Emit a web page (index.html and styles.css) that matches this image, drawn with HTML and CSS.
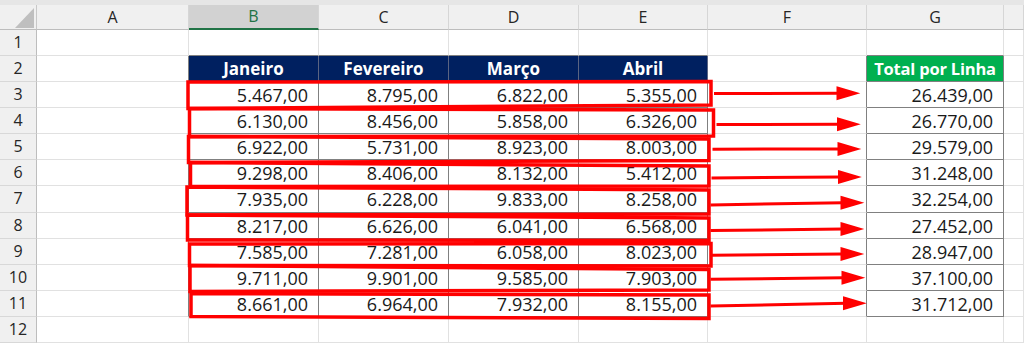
FILE: index.html
```html
<!DOCTYPE html>
<html lang="pt">
<head>
<meta charset="utf-8">
<title>Planilha</title>
<link rel="stylesheet" href="styles.css">
</head>
<body>
<div class="sheet">
  <div class="strip"></div>
  <div class="grid">
    <div class="corner"><svg width="37" height="25" viewBox="0 0 37 25"><polygon points="15,23 34,23 34,3" fill="#bfbfbf"/></svg></div>
    <div class="ch">A</div>
    <div class="ch sel">B</div>
    <div class="ch">C</div>
    <div class="ch">D</div>
    <div class="ch">E</div>
    <div class="ch">F</div>
    <div class="ch">G</div>
    <div class="ch"></div>

    <div class="rh">1</div>
    <div class="c"></div>
    <div class="c top"></div><div class="c top"></div><div class="c top"></div><div class="c top"></div>
    <div class="c"></div>
    <div class="c top"></div>
    <div class="c"></div>

    <div class="rh">2</div>
    <div class="c edge"></div>
    <div class="c hd">Janeiro</div>
    <div class="c hd">Fevereiro</div>
    <div class="c hd">Março</div>
    <div class="c hd">Abril</div>
    <div class="c edge"></div>
    <div class="c tot">Total por Linha</div>
    <div class="c"></div>

    <div class="rh">3</div><div class="c edge"></div>
    <div class="c num">5.467,00</div><div class="c num">8.795,00</div><div class="c num">6.822,00</div><div class="c num">5.355,00</div>
    <div class="c edge"></div><div class="c num">26.439,00</div><div class="c"></div>

    <div class="rh">4</div><div class="c edge"></div>
    <div class="c num">6.130,00</div><div class="c num">8.456,00</div><div class="c num">5.858,00</div><div class="c num">6.326,00</div>
    <div class="c edge"></div><div class="c num">26.770,00</div><div class="c"></div>

    <div class="rh">5</div><div class="c edge"></div>
    <div class="c num">6.922,00</div><div class="c num">5.731,00</div><div class="c num">8.923,00</div><div class="c num">8.003,00</div>
    <div class="c edge"></div><div class="c num">29.579,00</div><div class="c"></div>

    <div class="rh">6</div><div class="c edge"></div>
    <div class="c num">9.298,00</div><div class="c num">8.406,00</div><div class="c num">8.132,00</div><div class="c num">5.412,00</div>
    <div class="c edge"></div><div class="c num">31.248,00</div><div class="c"></div>

    <div class="rh">7</div><div class="c edge"></div>
    <div class="c num">7.935,00</div><div class="c num">6.228,00</div><div class="c num">9.833,00</div><div class="c num">8.258,00</div>
    <div class="c edge"></div><div class="c num">32.254,00</div><div class="c"></div>

    <div class="rh">8</div><div class="c edge"></div>
    <div class="c num">8.217,00</div><div class="c num">6.626,00</div><div class="c num">6.041,00</div><div class="c num">6.568,00</div>
    <div class="c edge"></div><div class="c num">27.452,00</div><div class="c"></div>

    <div class="rh">9</div><div class="c edge"></div>
    <div class="c num">7.585,00</div><div class="c num">7.281,00</div><div class="c num">6.058,00</div><div class="c num">8.023,00</div>
    <div class="c edge"></div><div class="c num">28.947,00</div><div class="c"></div>

    <div class="rh">10</div><div class="c edge"></div>
    <div class="c num">9.711,00</div><div class="c num">9.901,00</div><div class="c num">9.585,00</div><div class="c num">7.903,00</div>
    <div class="c edge"></div><div class="c num">37.100,00</div><div class="c"></div>

    <div class="rh">11</div><div class="c edge"></div>
    <div class="c num">8.661,00</div><div class="c num">6.964,00</div><div class="c num">7.932,00</div><div class="c num">8.155,00</div>
    <div class="c edge"></div><div class="c num">31.712,00</div><div class="c"></div>

    <div class="rh">12</div>
    <div class="c"></div><div class="c"></div><div class="c"></div><div class="c"></div><div class="c"></div><div class="c"></div><div class="c"></div><div class="c"></div>
  </div>

  <svg class="marks" width="1024" height="343" viewBox="0 0 1024 343">
    <g fill="none" stroke="#ff0000" stroke-width="3.5" stroke-linejoin="miter">
      <polygon points="188,82 711,81.5 711,105 188,108.5"/>
      <polygon points="189.5,108.5 713.5,110 713.5,136 189.5,136.5"/>
      <polygon points="188.5,136.5 709,139 709,160.5 188.5,162.5"/>
      <polygon points="190.5,162.5 709,166 709,186 190.5,186.5"/>
      <polygon points="187,187 709,190 709,214 187,215"/>
      <polygon points="187.5,215 709,218 709,240.5 187.5,240"/>
      <polygon points="189.5,244 711,243.5 711,266 189.5,265.5"/>
      <polygon points="190,265.5 709,269.5 709,290 190,291.5"/>
      <polygon points="191,293.5 709,295 709,318.5 191,316.5"/>
    </g>
    <g stroke="#ff0000" stroke-width="3" fill="#ff0000">
      <line x1="714" y1="93.5" x2="840" y2="93.3"/><polygon points="838,88.3 855,93.3 838,98.3"/>
      <line x1="716.5" y1="124.5" x2="840" y2="124.3"/><polygon points="838.5,119.3 855.5,124.3 838.5,129.3"/>
      <line x1="712.5" y1="149.2" x2="840" y2="149"/><polygon points="839,144 856,149 839,154"/>
      <line x1="711.5" y1="178" x2="841" y2="177"/><polygon points="839.5,172 856.5,177 839.5,182"/>
      <line x1="710.5" y1="205" x2="843" y2="202.7"/><polygon points="842,197.7 859,202.7 842,207.7"/>
      <line x1="710.5" y1="230.5" x2="843" y2="229"/><polygon points="842,224 859,229 842,234"/>
      <line x1="711.5" y1="255.2" x2="843" y2="254"/><polygon points="842,249 859,254 842,259"/>
      <line x1="710.5" y1="279.3" x2="844" y2="277.7"/><polygon points="843,272.7 860,277.7 843,282.7"/>
      <line x1="710.5" y1="306" x2="846" y2="303.3"/><polygon points="844.5,298.3 861.5,303.3 844.5,308.3"/>
    </g>
  </svg>
</div>
</body>
</html>
```

FILE: styles.css
```css
* { box-sizing: border-box; }
html, body { margin: 0; padding: 0; background: #ffffff; }
body { font-family: "Open Sans", "Noto Sans", sans-serif; color: #1f1f1f; }

.sheet {
  position: relative;
  width: 1024px;
  height: 343px;
  overflow: hidden;
}

.strip {
  height: 5px;
  background: #e6e6e6;
}

.grid {
  display: grid;
  grid-template-columns: 37px 152px 130px 130px 130px 129px 159px 137px 1fr;
  grid-template-rows: 25px 26px 26px 26px 26px 26px 26px 27px 26px 26px 26px 26px 26px;
}

.corner {
  background: #f0f0f0;
  border-right: 1px solid #c8c8c8;
  border-bottom: 1px solid #bdbdbd;
}
.corner svg { display: block; }

.ch {
  background: #f0f0f0;
  border-right: 1px solid #d6d6d6;
  border-bottom: 1px solid #bdbdbd;
  font-size: 16px;
  line-height: 24px;
  text-align: center;
  color: #262626;
}
.ch.sel {
  background: #d2d2d2;
  color: #217346;
  border-bottom: 2px solid #217346;
  line-height: 23px;
}

.rh {
  background: #f0f0f0;
  border-right: 1px solid #bdbdbd;
  border-bottom: 1px solid #d8d8d8;
  font-size: 16px;
  line-height: 25px;
  text-align: center;
  color: #262626;
}

.c {
  border-right: 1px solid #e1e1e1;
  border-bottom: 1px solid #e1e1e1;
}
.c.top { border-bottom-color: #808080; }
.c.edge { border-right-color: #808080; }

.hd {
  background: #002060;
  color: #ffffff;
  font-weight: 700;
  font-size: 17px;
  line-height: 25px;
  text-align: center;
  border-right-color: #5a6482;
  border-bottom-color: #808080;
}

.tot {
  background: #00b050;
  color: #ffffff;
  font-weight: 700;
  font-size: 16.5px;
  line-height: 25px;
  text-align: center;
  letter-spacing: -0.2px;
  border-right-color: #808080;
  border-bottom-color: #808080;
}

.num {
  font-size: 18px;
  line-height: 26px;
  text-align: right;
  padding-right: 10px;
  color: #1a1a1a;
  border-right-color: #808080;
  border-bottom-color: #808080;
}

.marks {
  position: absolute;
  top: 0;
  left: 0;
  pointer-events: none;
}
```
